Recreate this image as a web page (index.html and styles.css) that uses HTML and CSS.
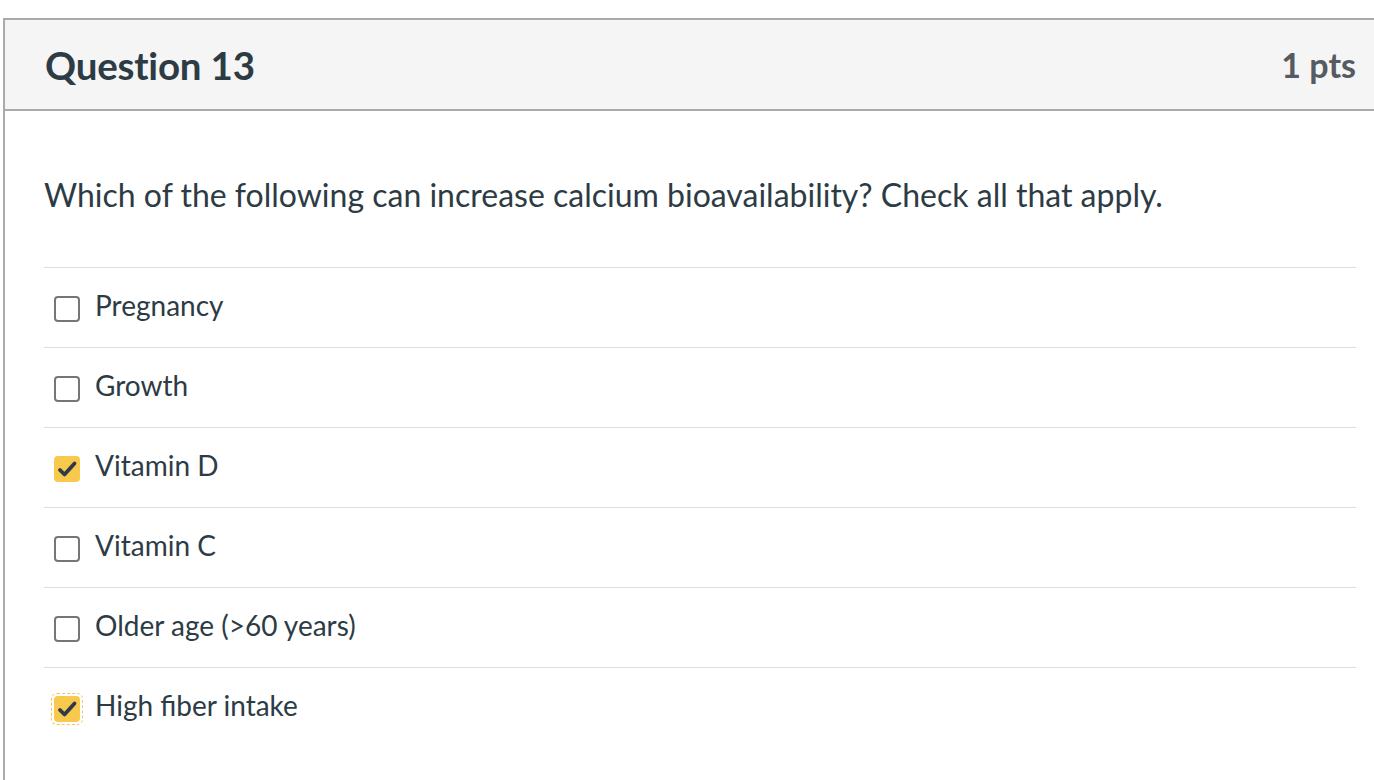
FILE: index.html
```html
<!DOCTYPE html>
<html>
<head>
<meta charset="utf-8">
<link rel="stylesheet" href="styles.css">
</head>
<body>
<div class="question">
  <div class="header">
    <h2 class="title">Question 13</h2>
    <span class="pts">1 pts</span>
  </div>
  <div class="content">
    <p class="text">Which of the following can increase calcium bioavailability? Check all that apply.</p>
    <div class="answers">
      <label class="answer"><span class="box"></span><span class="label">Pregnancy</span></label>
      <label class="answer"><span class="box"></span><span class="label">Growth</span></label>
      <label class="answer"><span class="box checked"><svg viewBox="0 0 26 26" width="26" height="26"><path d="M6 14 L10.5 18.5 L20.5 7.5" fill="none" stroke="#2d3b45" stroke-width="3.8" stroke-linecap="round" stroke-linejoin="round"/></svg></span><span class="label">Vitamin D</span></label>
      <label class="answer"><span class="box"></span><span class="label">Vitamin C</span></label>
      <label class="answer"><span class="box"></span><span class="label">Older age (&gt;60 years)</span></label>
      <label class="answer"><span class="box checked focus"><svg viewBox="0 0 26 26" width="26" height="26"><path d="M6 14 L10.5 18.5 L20.5 7.5" fill="none" stroke="#2d3b45" stroke-width="3.8" stroke-linecap="round" stroke-linejoin="round"/></svg></span><span class="label">High fiber intake</span></label>
    </div>
  </div>
</div>
</body>
</html>
```

FILE: styles.css
```css
html, body {
  margin: 0;
  padding: 0;
  background: #fff;
  font-family: Lato, "Open Sans", sans-serif;
  color: #2d3b45;
  overflow: hidden;
}
.question {
  margin-top: 18px;
  margin-left: 3px;
  border-top: 2px solid #aaaaaa;
  border-left: 2px solid #aaaaaa;
  height: 800px;
}
.header {
  height: 89px;
  background: #f5f5f5;
  border-bottom: 2px solid #aaaaaa;
  display: flex;
  align-items: center;
  justify-content: space-between;
  padding: 0 18px 0 40px;
}
.title {
  margin: 0;
  font-size: 38.5px;
  font-weight: 700;
  color: #2d3b45;
  letter-spacing: -0.2px;
}
.pts {
  font-size: 34px;
  font-weight: 700;
  color: #555b60;
}
.content {
  padding: 0 18px 0 39px;
}
.text {
  margin: 0;
  padding-top: 64px;
  height: 92px;
  font-size: 32px;
  line-height: 40px;
}
.answers {
  display: flex;
  flex-direction: column;
}
.answer {
  display: flex;
  align-items: center;
  gap: 15px;
  height: 79px;
  border-top: 1px solid #dddddd;
  padding-left: 10px;
}
.box {
  width: 22px;
  height: 22px;
  border: 2px solid #73777a;
  border-radius: 4px;
  flex: none;
  position: relative;
  margin-top: 2px;
}
.box svg {
  position: absolute;
  left: -2px;
  top: -2px;
}
.box.checked {
  background: #f8c94c;
  border-color: #f8c94c;
}
.box.focus::after {
  content: "";
  position: absolute;
  inset: -5px;
  border: 1px dashed #f3c55a;
  border-radius: 6px;
}
.label {
  font-size: 28px;
  line-height: 34px;
  margin-top: -6px;
  color: #2d3b45;
}
```
